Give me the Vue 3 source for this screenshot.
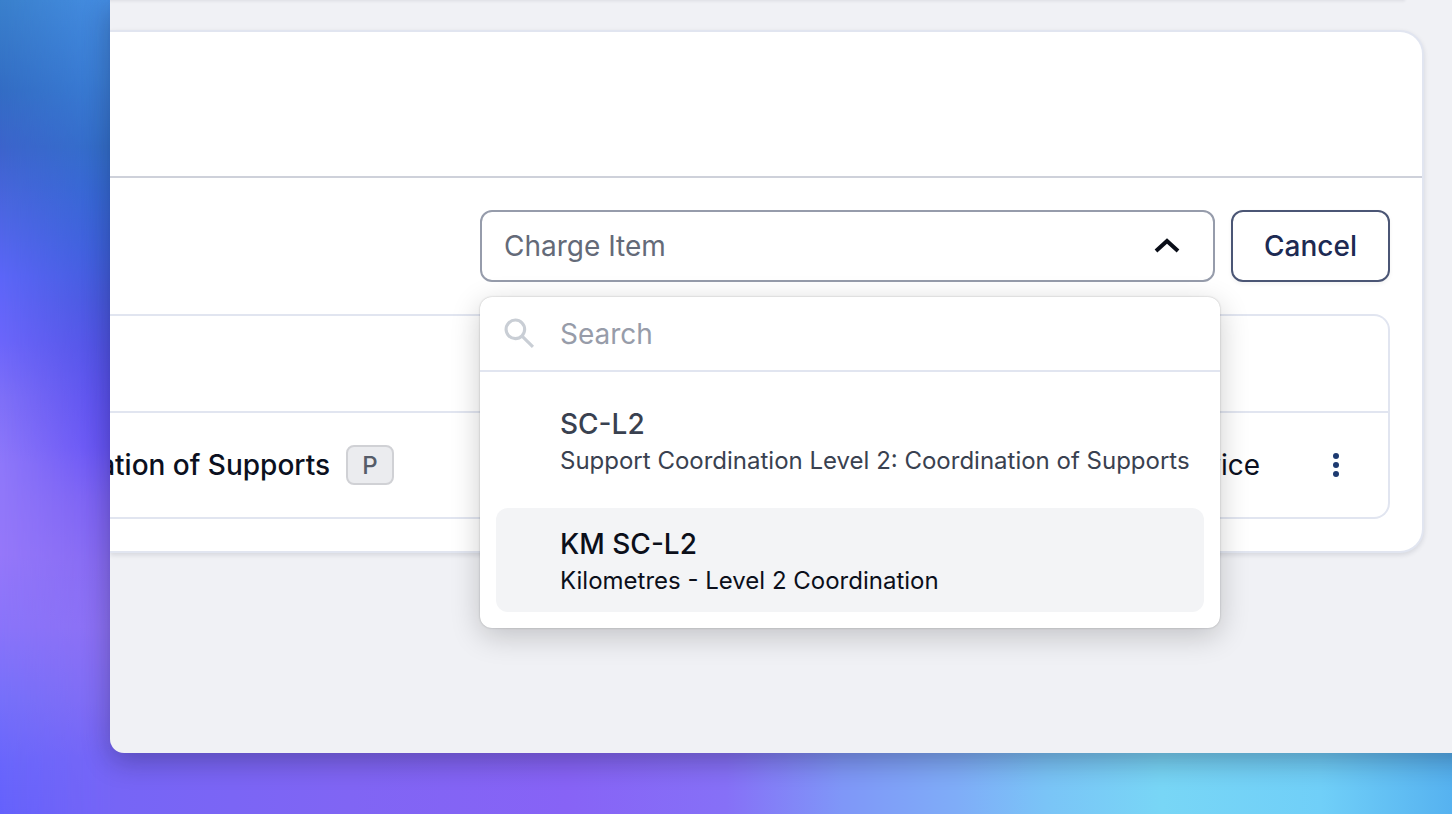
<script setup>
import { ref } from 'vue'

const open = ref(true)
const query = ref('')
const active = ref('KM SC-L2')
const items = [
  { code: 'SC-L2', name: 'Support Coordination Level 2: Coordination of Supports' },
  { code: 'KM SC-L2', name: 'Kilometres - Level 2 Coordination' },
]
</script>

<template>
  <div class="desktop">
    <main class="window">
      <div class="previous-card"></div>
      <section class="card">
        <header class="card-head"></header>
        <div class="toolbar">
          <div class="combo">
            <button type="button" class="trigger" aria-haspopup="listbox" :aria-expanded="open" @click="open = !open">
              <span>Charge Item</span>
              <svg class="chevron" viewBox="0 0 26 16" aria-hidden="true">
                <path d="M2 13 13 3l11 10" />
              </svg>
            </button>
            <div v-if="open" class="menu">
              <label class="search">
                <svg viewBox="0 0 30 30" aria-hidden="true">
                  <circle cx="11" cy="11" r="9" />
                  <path d="M17 17 28 28" />
                </svg>
                <input v-model="query" type="text" placeholder="Search" aria-label="Search" />
              </label>
              <ul class="options" role="listbox" aria-label="Charge Item">
                <li
                  v-for="item in items"
                  :key="item.code"
                  role="option"
                  class="option"
                  :class="{ active: item.code === active }"
                  :aria-selected="item.code === active"
                  @mouseenter="active = item.code"
                >
                  <span class="code">{{ item.code }}</span>
                  <span class="name">{{ item.name }}</span>
                </li>
              </ul>
            </div>
          </div>
          <button type="button" class="cancel">Cancel</button>
        </div>
        <table class="grid">
          <thead>
            <tr>
              <th class="col-item"></th>
              <th></th>
              <th class="col-action"></th>
            </tr>
          </thead>
          <tbody>
            <tr>
              <td class="col-item">
                <div class="item">
                  <span class="item-name">ation of Supports</span>
                  <span class="tag">P</span>
                </div>
              </td>
              <td class="kind">vice</td>
              <td class="col-action">
                <button type="button" class="more" aria-label="More actions">
                  <svg viewBox="0 0 8 26" aria-hidden="true">
                    <circle cx="4" cy="4" r="3" />
                    <circle cx="4" cy="13" r="3" />
                    <circle cx="4" cy="22" r="3" />
                  </svg>
                </button>
              </td>
            </tr>
          </tbody>
        </table>
      </section>
    </main>
  </div>
</template>

<style>
body {
  margin: 0;
}
</style>

<style scoped>
* {
  box-sizing: border-box;
}

.desktop {
  position: relative;
  isolation: isolate;
  display: flex;
  min-height: 100vh;
  padding: 0 0 61px 110px;
  overflow: hidden;
  font-family: Inter, "Liberation Sans", sans-serif;
  font-size: 28px;
  line-height: 40px;
  color: #0b1020;
  background: linear-gradient(
    90deg,
    #6562fc 0%,
    #7665f6 8%,
    #8065f4 24%,
    #8763f6 39%,
    #8670f7 50%,
    #7f97f8 58%,
    #7fadf8 66%,
    #7ac4f7 72%,
    #78d6f6 80%,
    #70cff8 91%,
    #56b2f0 100%
  );
}

.desktop::before,
.desktop::after {
  content: "";
  position: absolute;
  z-index: -1;
  top: 0;
  bottom: 0;
  left: 0;
  width: 110px;
}

.desktop::before {
  background: linear-gradient(
    180deg,
    #3a80cc 0%,
    #336dc4 11%,
    #3c64cc 18%,
    #4c66e2 26%,
    #5c66f8 34%,
    #6c66fb 42%,
    #7f70f8 49%,
    #8f78fa 57%,
    #9578fa 68%,
    #8a74fa 77%,
    #7670fa 86%,
    #6966fc 94%,
    #6562fc 100%
  );
}

.desktop::after {
  background: linear-gradient(
    180deg,
    #458de2 0%,
    #3c80d8 9%,
    #3370cb 18%,
    #3568d4 24%,
    #3c60da 31%,
    #4658dc 37%,
    #5052e4 43%,
    #5a50ee 49%,
    #6452f4 55%,
    #785ff2 61%,
    #866af2 69%,
    #8c70f4 77%,
    #826cf4 86%,
    #7666f6 93%,
    #7665f6 100%
  );
  mask-image: linear-gradient(90deg, transparent, #000);
}

.window {
  flex: 1;
  min-width: 0;
  margin-right: -30px;
  padding-right: 58px;
  overflow: hidden;
  background: #f0f1f5;
  border-radius: 0 0 0 14px;
  box-shadow: 0 8px 28px rgba(20, 20, 40, 0.32);
}

.previous-card {
  height: 0;
  margin: 0 20px 30px 0;
  box-shadow: 0 0 3px 1px rgba(30, 35, 60, 0.12);
}

.card {
  background: #fff;
  border: 2px solid #e1e5f0;
  border-left: 0;
  border-radius: 0 24px 24px 0;
  box-shadow: 0 2px 5px rgba(20, 25, 50, 0.12);
}

.card-head {
  height: 146px;
  border-bottom: 2px solid #ced1da;
}

.toolbar {
  display: flex;
  gap: 16px;
  padding: 32px 32px 32px 370px;
}

.combo {
  position: relative;
  flex: 1;
}

button,
input {
  font: inherit;
  color: inherit;
}

.trigger {
  display: flex;
  align-items: center;
  justify-content: space-between;
  width: 100%;
  height: 72px;
  padding: 0 33px 0 22px;
  color: #646a78;
  background: #fff;
  border: 2px solid #969cab;
  border-radius: 12px;
}

.chevron {
  width: 26px;
  height: 16px;
  fill: none;
  stroke: #0a0e18;
  stroke-width: 4;
}

.cancel {
  width: 159px;
  height: 72px;
  padding: 0;
  font-weight: 500;
  color: #1d2a53;
  background: #fff;
  border: 2px solid #4b5675;
  border-radius: 12px;
  box-shadow: 0 2px 4px rgba(0, 0, 0, 0.05);
}

.menu {
  position: absolute;
  z-index: 2;
  top: 87px;
  left: 0;
  width: 740px;
  background: #fff;
  border-radius: 12px;
  box-shadow: 0 0 2px rgba(0, 0, 0, 0.25), 0 8px 30px rgba(0, 0, 0, 0.2);
}

.search {
  display: flex;
  align-items: center;
  gap: 25px;
  height: 75px;
  padding: 0 24px;
  border-bottom: 2px solid #e1e5f0;
}

.search svg {
  flex: none;
  width: 31px;
  height: 31px;
  fill: none;
  stroke: #c9ced5;
  stroke-width: 3;
}

.search input {
  flex: 1;
  min-width: 0;
  padding: 0;
  background: none;
  border: 0;
  outline: 0;
}

.search input::placeholder {
  color: #979ca9;
  opacity: 1;
}

.options {
  display: grid;
  gap: 16px;
  margin: 0;
  padding: 16px;
  list-style: none;
}

.option {
  display: flex;
  flex-direction: column;
  height: 104px;
  padding: 16px 0 0 64px;
  color: #394150;
  white-space: nowrap;
  border-radius: 12px;
}

.option.active {
  color: #0b0f1a;
  background: #f3f4f6;
}

.code {
  font-weight: 500;
}

.name {
  font-size: 24px;
  line-height: 34px;
}

.grid {
  width: calc(100% - 32px);
  margin-bottom: 32px;
  table-layout: fixed;
  border: 2px solid #e1e5f0;
  border-left: 0;
  border-radius: 0 16px 16px 0;
  border-spacing: 0;
}

.grid th {
  height: 95px;
  padding: 0;
}

.grid td {
  height: 106px;
  padding: 0;
  border-top: 2px solid #e1e5f0;
}

.col-item {
  width: 284px;
}

.col-action {
  width: 128px;
}

.item {
  display: flex;
  align-items: center;
  justify-content: flex-end;
  gap: 16px;
  overflow: hidden;
}

.item-name {
  font-weight: 500;
  white-space: nowrap;
}

.tag {
  flex: none;
  width: 48px;
  height: 40px;
  font-size: 24px;
  font-weight: 500;
  line-height: 38px;
  color: #565c69;
  text-align: center;
  background: #ebecef;
  border: 2px solid #d0d1d5;
  border-radius: 8px;
}

.grid .kind {
  text-align: right;
}

.more {
  display: flex;
  align-items: center;
  justify-content: center;
  width: 48px;
  height: 48px;
  margin-left: 52px;
  padding: 0;
  background: none;
  border: 0;
}

.more svg {
  width: 8px;
  height: 26px;
  fill: #1d3a70;
}
</style>
